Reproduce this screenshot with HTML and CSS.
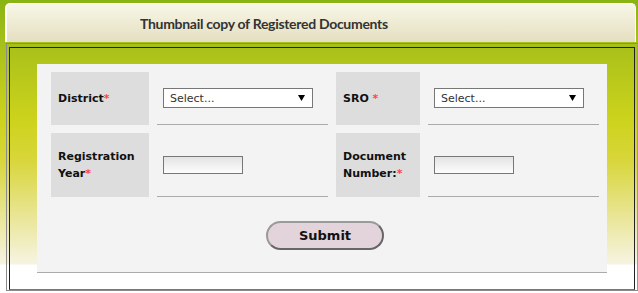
FILE: index.html
```html
<!DOCTYPE html>
<html>
<head>
<meta charset="utf-8">
<link rel="stylesheet" href="styles.css">
</head>
<body>
<div class="header"><h1 class="title">Thumbnail copy of Registered Documents</h1></div>
<div class="outer">
  <div class="inner">
    <div class="panel">
      <div class="form-grid">
        <div class="label"><span>District<span class="req">*</span></span></div>
        <div class="field">
          <div class="select"><span>Select...</span><svg class="arrow" width="7" height="6" viewBox="0 0 7 6"><path d="M0 0H7L3.5 6Z" fill="#000"/></svg></div>
        </div>
        <div class="label"><span>SRO <span class="req">*</span></span></div>
        <div class="field">
          <div class="select"><span>Select...</span><svg class="arrow" width="7" height="6" viewBox="0 0 7 6"><path d="M0 0H7L3.5 6Z" fill="#000"/></svg></div>
        </div>
        <div class="label"><span>Registration<br>Year<span class="req">*</span></span></div>
        <div class="field"><input class="text" type="text"></div>
        <div class="label"><span>Document<br>Number:<span class="req">*</span></span></div>
        <div class="field"><input class="text" type="text"></div>
      </div>
      <div class="actions"><button class="submit" type="button">Submit</button></div>
    </div>
  </div>
</div>
</body>
</html>
```

FILE: styles.css
```css
html, body {
  margin: 0;
  padding: 0;
}
body {
  width: 638px;
  height: 293px;
  overflow: hidden;
  background:
    linear-gradient(to bottom, #88b414 0px, #a9c11a 48px, #cdd31c 120px, #d8d63a 160px, #e9e594 215px, #f6f4e2 264px, #ffffff 265px) no-repeat;
  background-color: #fff;
  font-family: "DejaVu Sans", Verdana, sans-serif;
}
.header {
  margin: 3px 2px 0 5px;
  height: 39px;
  box-sizing: border-box;
  border: 1px solid #fff;
  border-left-width: 2px;
  border-bottom: none;
  border-radius: 5px 5px 0 0;
  background: linear-gradient(to bottom, #f8f6e7, #e5dfc0);
  display: flex;
  align-items: center;
}
.title {
  margin: 0 0 0 133px;
  font-family: Lato, "Liberation Sans", sans-serif;
  font-weight: bold;
  font-size: 14px;
  letter-spacing: -0.3px;
  color: #333;
}
.outer {
  margin: 1px 0 0 6px;
  border: 1px solid #8a8a8a;
  border-right-color: #9a9a9a;
  padding: 3px 2px 0 2px;
}
.inner {
  border: 1px solid #222;
  border-bottom-color: #777;
  padding: 16px 0 16px;
}
.panel {
  width: 570px;
  margin: 0 auto;
  background: #f3f3f3;
  border-bottom: 1px solid #aaa;
  padding: 8px 8px 22px 14px;
  box-sizing: border-box;
}
.form-grid {
  display: grid;
  grid-template-columns: 98px 171px 84px 171px;
  grid-template-rows: 53px 64px;
  gap: 8px;
}
.label {
  background: #dddddd;
  font-weight: bold;
  font-size: 11px;
  line-height: 17px;
  color: #111;
  padding-left: 7px;
  display: flex;
  align-items: center;
}
.req {
  color: #ff4747;
}
.field {
  border-bottom: 1px solid #aaa;
  padding-left: 6px;
  display: flex;
  align-items: center;
}
.select {
  width: 150px;
  height: 20px;
  box-sizing: border-box;
  border: 1px solid #777;
  background: #fff;
  display: flex;
  align-items: center;
  justify-content: space-between;
  padding: 0 7px 0 6px;
  font-size: 11px;
  color: #333;
}
.arrow {
  display: block;
}
.text {
  width: 80px;
  height: 18px;
  box-sizing: border-box;
  border: 1px solid #777;
  background: linear-gradient(to bottom, #e3e3e3, #fdfdfd);
  margin: 0;
  padding: 0;
}
.actions {
  margin-top: 24px;
  width: 548px;
  display: flex;
  justify-content: center;
}
.submit {
  width: 118px;
  height: 29px;
  border-radius: 15px;
  border: 2px solid #9a9a9a;
  border-right-color: #666;
  border-bottom-color: #666;
  background: #e3d3da;
  font-family: "DejaVu Sans", Verdana, sans-serif;
  font-weight: bold;
  font-size: 13px;
  color: #111;
  padding: 0;
  margin: 0;
}
```
